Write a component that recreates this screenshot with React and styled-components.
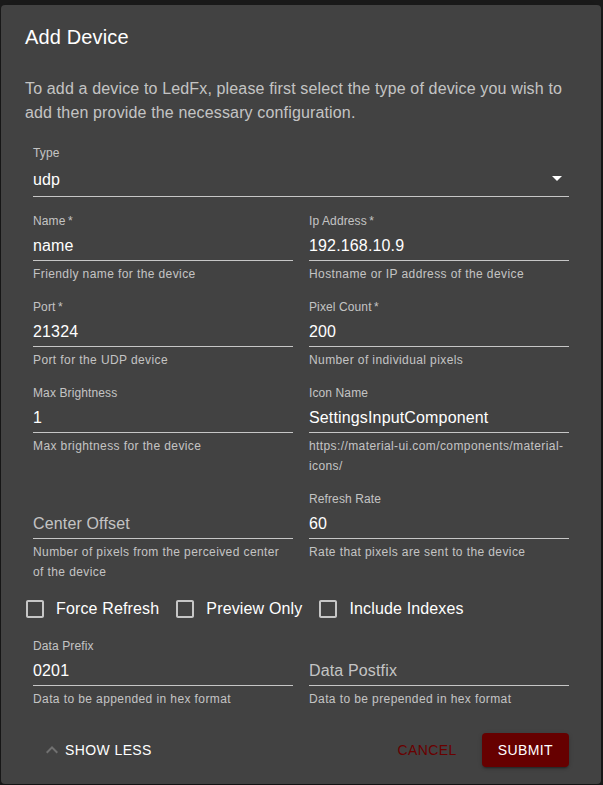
import React from "react";
import styled, { createGlobalStyle } from "styled-components";

const Global = createGlobalStyle`
  html, body { margin: 0; padding: 0; background: #1c1c1c; }
  body { font-family: "Liberation Sans", Arial, Helvetica, sans-serif; }
  * { box-sizing: border-box; }
`;

const Page = styled.div`
  padding: 5px 2px 1px 1px;
  width: 603px;
  height: 785px;
`;

const Dialog = styled.div`
  width: 600px;
  height: 779px;
  background: #424242;
  border-radius: 4px;
  display: flex;
  flex-direction: column;
  overflow: hidden;
  box-shadow: 0 11px 15px -7px rgba(0,0,0,0.2), 0 24px 38px 3px rgba(0,0,0,0.14), 0 9px 46px 8px rgba(0,0,0,0.12);
`;

const Title = styled.h2`
  margin: 0;
  padding: 16px 24px;
  font-size: 20px;
  line-height: 32px;
  font-weight: 500;
  letter-spacing: 0.15px;
  color: #fff;
`;

const Content = styled.div`
  padding: 8px 24px 0;
`;

const Description = styled.p`
  margin: 0 0 12px;
  font-size: 16px;
  line-height: 24px;
  letter-spacing: 0.15px;
  color: rgba(255, 255, 255, 0.7);
`;

const Form = styled.div`
  padding: 7.5px 8px 0;
  display: flex;
  flex-direction: column;
`;

const Grid = styled.div`
  display: grid;
  grid-template-columns: 260px 260px;
  column-gap: 16px;
  row-gap: 15px;
  align-items: start;
  margin-top: ${(p) => p.$top || 0}px;
`;

const FieldBox = styled.div`
  display: flex;
  flex-direction: column;
  min-width: 0;
`;

const Label = styled.div`
  height: 16px;
  font-size: 12px;
  line-height: 16px;
  letter-spacing: 0.11px;
  color: rgba(255, 255, 255, 0.7);
  white-space: nowrap;
`;

const InputBox = styled.div`
  position: relative;
  height: ${(p) => (p.$select ? 36 : 32)}px;
  padding: ${(p) => (p.$select ? "9px 24px 7px 0" : "7px 0 5px")};
  border-bottom: 1px solid rgba(255, 255, 255, 0.7);
  font-size: 16px;
  line-height: 19px;
  letter-spacing: 0.15px;
  color: ${(p) => (p.$empty ? "rgba(255, 255, 255, 0.7)" : "#fff")};
  white-space: nowrap;
`;

const Arrow = styled.svg`
  position: absolute;
  right: 0;
  top: calc(50% - 12px);
  width: 24px;
  height: 24px;
  fill: #fff;
`;

const Helper = styled.div`
  margin-top: 3px;
  font-size: 12px;
  line-height: 20px;
  letter-spacing: 0.4px;
  color: rgba(255, 255, 255, 0.7);
`;

const CheckRow = styled.div`
  display: flex;
  align-items: center;
  gap: 5px;
  margin: 6px 0 0 -19px;
`;

const CheckLabel = styled.label`
  display: inline-flex;
  align-items: center;
  font-size: 16px;
  line-height: 24px;
  letter-spacing: 0.15px;
  color: #fff;
`;

const CheckIcon = styled.span`
  display: inline-flex;
  padding: 9px;
  svg { width: 24px; height: 24px; fill: rgba(255, 255, 255, 0.7); }
`;

const Footer = styled.div`
  margin-top: auto;
  display: flex;
  align-items: center;
  justify-content: space-between;
  padding: 0 32px 17px 31px;
`;

const TextButton = styled.button`
  display: inline-flex;
  align-items: center;
  border: 0;
  background: transparent;
  padding: 5px 8px;
  font-family: inherit;
  font-size: 14px;
  line-height: 24.5px;
  font-weight: 500;
  letter-spacing: 0.4px;
  text-transform: uppercase;
  color: ${(p) => p.$color || "#fff"};
  svg { width: 24px; height: 24px; margin-right: 1px; fill: rgba(255, 255, 255, 0.25); }
`;

const Actions = styled.div`
  display: flex;
  align-items: center;
  gap: 17px;
`;

const SubmitButton = styled.button`
  border: 0;
  border-radius: 4px;
  background: #660000;
  color: #fff;
  padding: 5px 16px;
  font-family: inherit;
  font-size: 14px;
  line-height: 24.5px;
  font-weight: 500;
  letter-spacing: 0.4px;
  text-transform: uppercase;
  box-shadow: 0 3px 1px -2px rgba(0,0,0,0.2), 0 2px 2px 0 rgba(0,0,0,0.14), 0 1px 5px 0 rgba(0,0,0,0.12);
`;

function Field({ label, required, value, helper, select }) {
  const empty = value === undefined;
  return (
    <FieldBox>
      <Label>{empty ? "" : label}{!empty && required ? "\u2009*" : ""}</Label>
      <InputBox $select={select} $empty={empty}>
        {empty ? label : value}
        {select && (
          <Arrow viewBox="0 0 24 24">
            <path d="M7 10l5 5 5-5z" />
          </Arrow>
        )}
      </InputBox>
      {helper && <Helper>{helper}</Helper>}
    </FieldBox>
  );
}

function Check({ label }) {
  return (
    <CheckLabel>
      <CheckIcon>
        <svg viewBox="0 0 24 24">
          <path d="M19 5v14H5V5h14m0-2H5c-1.1 0-2 .9-2 2v14c0 1.1.9 2 2 2h14c1.1 0 2-.9 2-2V5c0-1.1-.9-2-2-2z" />
        </svg>
      </CheckIcon>
      {label}
    </CheckLabel>
  );
}

export default function App() {
  return (
    <>
      <Global />
      <Page>
        <Dialog>
          <Title>Add Device</Title>
          <Content>
            <Description>
              To add a device to LedFx, please first select the type of device you wish to add then provide the necessary configuration.
            </Description>
            <Form>
              <Field label="Type" value="udp" select />
              <Grid $top={16}>
                <Field label="Name" required value="name" helper="Friendly name for the device" />
                <Field label="Ip Address" required value="192.168.10.9" helper="Hostname or IP address of the device" />
                <Field label="Port" required value="21324" helper="Port for the UDP device" />
                <Field label="Pixel Count" required value="200" helper="Number of individual pixels" />
                <Field label="Max Brightness" value="1" helper="Max brightness for the device" />
                <Field label="Icon Name" value="SettingsInputComponent" helper="https://material-ui.com/components/material-icons/" />
                <Field label="Center Offset" helper="Number of pixels from the perceived center of the device" />
                <Field label="Refresh Rate" value="60" helper="Rate that pixels are sent to the device" />
              </Grid>
              <CheckRow>
                <Check label="Force Refresh" />
                <Check label="Preview Only" />
                <Check label="Include Indexes" />
              </CheckRow>
              <Grid $top={8}>
                <Field label="Data Prefix" value="0201" helper="Data to be appended in hex format" />
                <Field label="Data Postfix" helper="Data to be prepended in hex format" />
              </Grid>
            </Form>
          </Content>
          <Footer>
            <TextButton>
              <svg viewBox="0 0 24 24">
                <path d="M12 8l-6 6 1.41 1.41L12 10.83l4.59 4.58L18 14z" />
              </svg>
              Show less
            </TextButton>
            <Actions>
              <TextButton $color="#6a0000">Cancel</TextButton>
              <SubmitButton>Submit</SubmitButton>
            </Actions>
          </Footer>
        </Dialog>
      </Page>
    </>
  );
}
